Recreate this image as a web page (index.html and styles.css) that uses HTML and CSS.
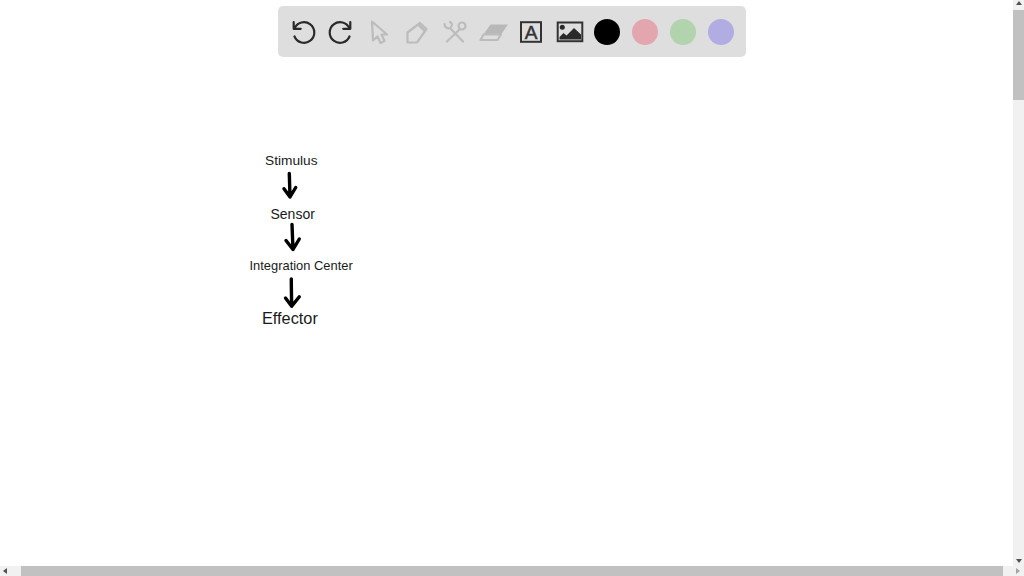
FILE: index.html
```html
<!DOCTYPE html>
<html lang="en">
<head>
<meta charset="utf-8">
<title>Whiteboard</title>
<link rel="stylesheet" href="styles.css">
</head>
<body>
<div class="window">
  <div class="top">
    <main class="board">
      <div class="toolbar">
        <svg class="tool" viewBox="0 0 26 26"><path class="dark" d="M4.500 9.500A10.300 10.300 0 1 1 4.500 17.500M3.700 3V9.800H10.700"/></svg>
        <svg class="tool" viewBox="0 0 26 26"><path class="dark" d="M21.500 9.500A10.300 10.300 0 1 0 21.500 17.500M22.300 3V9.800H15.300"/></svg>
        <svg class="tool" viewBox="0 0 26 26"><path class="light" d="M6 2.500L21 15.500h-5.500l3 6.500-4 2-3-6.500-4.500 4z"/></svg>
        <svg class="tool" viewBox="0 0 26 26"><path class="light" d="M3.500 23.500V13.500L16 4l6.500 6L13 23.500z"/><path class="light wide" d="M15.500 6.500l4.500 4.500"/></svg>
        <svg class="tool" viewBox="0 0 26 26"><path class="light" d="M8 9L21 22.500M18 10L5 22.500M2.500 5c0 3.500 3.500 5.500 6 3.500s1.500-4.500-.5-5.500"/><circle class="light" cx="20" cy="7" r="3.500"/></svg>
        <svg class="tool" viewBox="0 0 26 26"><path class="fill-light" d="M10.500 5.500H28L21 15.500H3.500z"/><path class="light" d="M3.500 15.500H21L17.500 21H0.500z"/></svg>
        <svg class="tool" viewBox="0 0 26 26"><rect class="dark thin" x="3" y="3.200" width="20" height="19.600"/><text class="glyph" x="13" y="19.800">A</text></svg>
        <svg class="tool" viewBox="0 0 26 26"><rect class="dark thin" x="1.700" y="3.500" width="24.600" height="18.700"/><circle class="fill-dark" cx="6.300" cy="8.200" r="2.500"/><path class="fill-dark" d="M3.500 20.500V18l4-4 3 2.500L18 9l7 6.500v5z"/></svg>
        <span class="swatch black"></span>
        <span class="swatch pink"></span>
        <span class="swatch green"></span>
        <span class="swatch blue"></span>
      </div>

      <span class="label stimulus">Stimulus</span>
      <svg class="arrow arrow-one" viewBox="0 0 20 30"><path d="M9.300 2.500c.2 8 .5 16 .7 23.500M4 17.700L10 26l5.700-9.500"/></svg>
      <span class="label sensor">Sensor</span>
      <svg class="arrow arrow-two" viewBox="0 0 20 30"><path d="M9 1.500c.3 8 .7 17 1 25M3 17.500L10 26.500l6.300-10.500"/></svg>
      <span class="label integration">Integration Center</span>
      <svg class="arrow arrow-three" viewBox="0 0 20 32"><path d="M8.300 2c0 9 .2 18 .4 27M2.500 21l6.200 8.300L16.300 19.800"/></svg>
      <span class="label effector">Effector</span>
    </main>
    <div class="scroll-y">
      <span class="step up"></span>
      <span class="thumb-y"></span>
      <span class="fill"></span>
      <span class="step down"></span>
    </div>
  </div>
  <div class="scroll-x">
    <span class="step left"></span>
    <span class="thumb-x"></span>
    <span class="step right"></span>
  </div>
</div>
</body>
</html>
```
FILE: styles.css
```css
* { box-sizing: border-box; }
html, body { margin: 0; height: 100%; overflow: hidden; background: #fff; }
.window { display: flex; flex-direction: column; width: 1024px; height: 576px; font-family: "Liberation Sans", Arial, sans-serif; color: #1a1a1a; }
.top { display: flex; flex: 1; min-height: 0; }
.board { position: relative; flex: 1; background: #fff; }

.toolbar { position: absolute; left: 278px; top: 6px; width: 468px; height: 51px; padding: 0 12px; display: flex; align-items: center; gap: 12px; background: #dedede; border-radius: 5px; }
.tool { width: 26px; height: 26px; flex: none; overflow: visible; }
.dark, .light { fill: none; stroke-linecap: round; stroke-linejoin: round; }
.dark { stroke: #2a2a2a; stroke-width: 2.2; }
.dark.thin { stroke: #333; stroke-linecap: butt; stroke-linejoin: miter; stroke-width: 2; }
.light { stroke: #bcbcbc; stroke-width: 2.2; }
.light.wide { stroke-width: 3; }
.fill-dark { fill: #2a2a2a; }
.fill-light { fill: #b8b8b8; }
.glyph { fill: #333; stroke: #333; stroke-width: 0.5; font-size: 19px; text-anchor: middle; }
.swatch { width: 26px; height: 26px; flex: none; border-radius: 50%; }
.black { background: #000; }
.pink { background: #e4a6ae; }
.green { background: #b1d3ae; }
.blue { background: #b1ace2; }

.label { position: absolute; white-space: nowrap; line-height: 1; }
.stimulus { left: 265px; top: 154px; font-size: 13.7px; }
.sensor { left: 270.500px; top: 207px; font-size: 14px; }
.integration { left: 249.500px; top: 260px; font-size: 12.900px; }
.effector { left: 262px; top: 310px; font-size: 16.300px; }

.arrow { position: absolute; width: 20px; overflow: visible; }
.arrow path { fill: none; stroke: #000; stroke-width: 3.4; stroke-linecap: round; stroke-linejoin: round; }
.arrow-one { left: 280px; top: 171px; height: 30px; }
.arrow-two { left: 283px; top: 223px; height: 30px; }
.arrow-three { left: 283px; top: 277px; height: 32px; }

.scroll-y { width: 11px; display: flex; flex-direction: column; background: #f1f1f1; }
.scroll-x { height: 10px; display: flex; align-items: stretch; background: #f1f1f1; }
.thumb-y { height: 90px; background: #c1c1c1; flex: none; }
.thumb-x { width: 982px; margin-left: 11px; background: #c1c1c1; flex: none; }
.fill { flex: 1; }
.step { position: relative; display: block; flex: none; }
.up, .down { height: 10px; }
.left { width: 10px; }
.right { width: 10px; margin-left: 10px; }
.step::after { content: ""; position: absolute; width: 0; height: 0; border: 3px solid transparent; }
.up::after { left: 2.500px; top: 1px; border-bottom: 4px solid #505050; border-top-width: 0; }
.down::after { left: 2.500px; top: 3px; border-top: 4px solid #505050; border-bottom-width: 0; }
.left::after { left: 3px; top: 2px; border-right: 4px solid #505050; border-left-width: 0; }
.right::after { left: 3px; top: 2px; border-left: 4px solid #a3a3a3; border-right-width: 0; }
```
